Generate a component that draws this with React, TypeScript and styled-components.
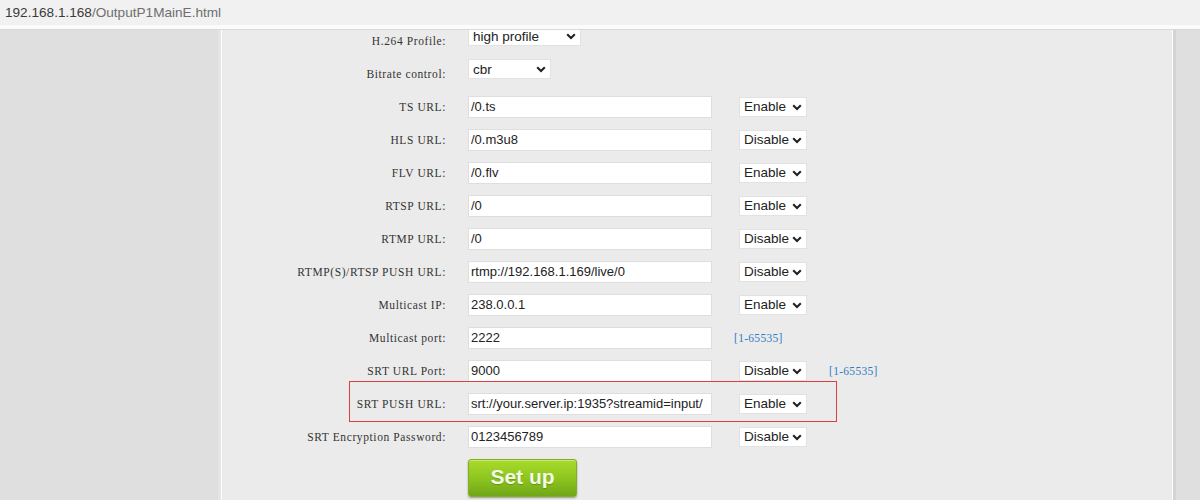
import React from "react";
import styled, { createGlobalStyle } from "styled-components";

const Global = createGlobalStyle`
  html, body { margin: 0; padding: 0; background: #dfdfdf; }
  body { width: 1200px; height: 500px; overflow: hidden; font-family: Arial, "Liberation Sans", sans-serif; }
`;

const Page = styled.div`
  display: flex;
  flex-direction: column;
  height: 500px;
`;

const AddressBar = styled.div`
  height: 25px;
  background: #f1f1f1;
  display: flex;
  align-items: center;
  padding-left: 5px;
  font-family: "Liberation Sans", Arial, sans-serif;
  font-size: 13.6px;
  border-bottom: 4px solid #fbfbfb;
  box-shadow: 0 1px 0 #d9d9d9;
  position: relative;
  z-index: 2;
`;

const Host = styled.span`
  color: #3a3a3a;
`;

const PathPart = styled.span`
  color: #6f6f6f;
`;

const Viewport = styled.div`
  flex: 1;
  overflow: hidden;
  display: flex;
  margin-top: 1px;
`;

const Panel = styled.div`
  margin-left: 221px;
  width: 950px;
  background: #ebebeb;
  border-left: 1px solid #ffffff;
  border-right: 1px solid #ffffff;
  box-shadow: -3px 0 0 #e5e5e5, 3px 0 0 #d4d4d4;
`;

const Form = styled.div`
  display: flex;
  flex-direction: column;
  margin-top: -6px;
`;

const Row = styled.div`
  position: relative;
  display: flex;
  align-items: center;
  height: 33px;
`;

const Highlight = styled.div`
  position: absolute;
  left: 127px;
  top: -6px;
  width: 486px;
  height: 39px;
  border: 1px solid #d9403f;
  pointer-events: none;
`;

const Label = styled.div`
  width: 224px;
  margin-right: 22px;
  text-align: right;
  font-family: "Liberation Serif", "DejaVu Serif", serif;
  font-size: 11.5px;
  letter-spacing: 0.6px;
  color: #333;
  white-space: nowrap;
`;

const TextInput = styled.input`
  box-sizing: border-box;
  width: 244px;
  height: 22px;
  margin: 0;
  padding: 0 2px;
  border: 1px solid #dedede;
  background: #fff;
  font-family: Arial, "Liberation Sans", sans-serif;
  font-size: 13px;
  color: #222;
  outline: none;
`;

const SelectWrap = styled.div<{ $w: number; $top?: boolean; $gap?: number }>`
  position: relative;
  box-sizing: border-box;
  width: ${(p) => p.$w}px;
  height: 20px;
  margin-left: ${(p) => p.$gap ?? 0}px;
  align-self: ${(p) => (p.$top ? "flex-start" : "center")};
  margin-top: ${(p) => (p.$top ? "2px" : "0")};
`;

const NativeSelect = styled.select`
  appearance: none;
  -webkit-appearance: none;
  box-sizing: border-box;
  width: 100%;
  height: 100%;
  margin: 0;
  padding: 0 0 0 4px;
  border: 1px solid #e2e2e2;
  border-radius: 0;
  background: #fff;
  font-family: Arial, "Liberation Sans", sans-serif;
  font-size: 13.5px;
  color: #222;
  outline: none;
`;

const Chevron = styled.svg`
  position: absolute;
  right: 5px;
  top: 7px;
  pointer-events: none;
`;

const Range = styled.span<{ $gap: number }>`
  margin-left: ${(p) => p.$gap}px;
  font-family: "Liberation Serif", "DejaVu Serif", serif;
  font-size: 11.5px;
  letter-spacing: 0.3px;
  color: #2f7dc3;
`;

const ButtonRow = styled.div`
  display: flex;
  padding-left: 246px;
  margin-top: 6px;
`;

const SetupButton = styled.button`
  box-sizing: border-box;
  width: 109px;
  height: 38px;
  border: 1px solid #86ad2a;
  border-radius: 3px;
  background: linear-gradient(#a9da2c, #8ec61f 50%, #70a618);
  box-shadow: 0 1px 2px rgba(0, 0, 0, 0.35), inset 0 1px 0 rgba(255, 255, 255, 0.35);
  font-family: Arial, "Liberation Sans", sans-serif;
  font-weight: bold;
  font-size: 21px;
  color: #f3f9e4;
  text-shadow: 0 1px 1px rgba(60, 90, 0, 0.4);
  padding: 0 0 2px;
  cursor: pointer;
`;

const Select = ({ value, options, w, top, gap }: { value: string; options: string[]; w: number; top?: boolean; gap?: number }) => (
  <SelectWrap $w={w} $top={top} $gap={gap}>
    <NativeSelect defaultValue={value}>
      {options.map((o) => (
        <option key={o}>{o}</option>
      ))}
    </NativeSelect>
    <Chevron width="10" height="7" viewBox="0 0 10 7">
      <path d="M1.2 1.3 L5 5 L8.8 1.3" fill="none" stroke="#222" strokeWidth="2.1" />
    </Chevron>
  </SelectWrap>
);

type R = { label: string; value: string; state?: string; range?: boolean; hl?: boolean };

const rows: R[] = [
  { label: "TS URL:", value: "/0.ts", state: "Enable" },
  { label: "HLS URL:", value: "/0.m3u8", state: "Disable" },
  { label: "FLV URL:", value: "/0.flv", state: "Enable" },
  { label: "RTSP URL:", value: "/0", state: "Enable" },
  { label: "RTMP URL:", value: "/0", state: "Disable" },
  { label: "RTMP(S)/RTSP PUSH URL:", value: "rtmp://192.168.1.169/live/0", state: "Disable" },
  { label: "Multicast IP:", value: "238.0.0.1", state: "Enable" },
  { label: "Multicast port:", value: "2222", range: true },
  { label: "SRT URL Port:", value: "9000", state: "Disable", range: true },
  { label: "SRT PUSH URL:", value: "srt://your.server.ip:1935?streamid=input/", state: "Enable", hl: true },
  { label: "SRT Encryption Password:", value: "0123456789", state: "Disable" },
];

export default function App() {
  return (
    <Page>
      <Global />
      <AddressBar>
        <Host>192.168.1.168</Host>
        <PathPart>/OutputP1MainE.html</PathPart>
      </AddressBar>
      <Viewport>
        <Panel>
          <Form>
            <Row>
              <Label>H.264 Profile:</Label>
              <Select value="high profile" options={["baseline profile", "main profile", "high profile"]} w={113} top />
            </Row>
            <Row>
              <Label>Bitrate control:</Label>
              <Select value="cbr" options={["cbr", "vbr"]} w={83} top />
            </Row>
            {rows.map((r) => (
              <Row key={r.label}>
                {r.hl && <Highlight />}
                <Label>{r.label}</Label>
                <TextInput readOnly defaultValue={r.value} />
                {r.state && <Select value={r.state} options={["Enable", "Disable"]} w={68} gap={27} />}
                {r.range && <Range $gap={22}>[1-65535]</Range>}
              </Row>
            ))}
            <ButtonRow>
              <SetupButton>Set up</SetupButton>
            </ButtonRow>
          </Form>
        </Panel>
      </Viewport>
    </Page>
  );
}
